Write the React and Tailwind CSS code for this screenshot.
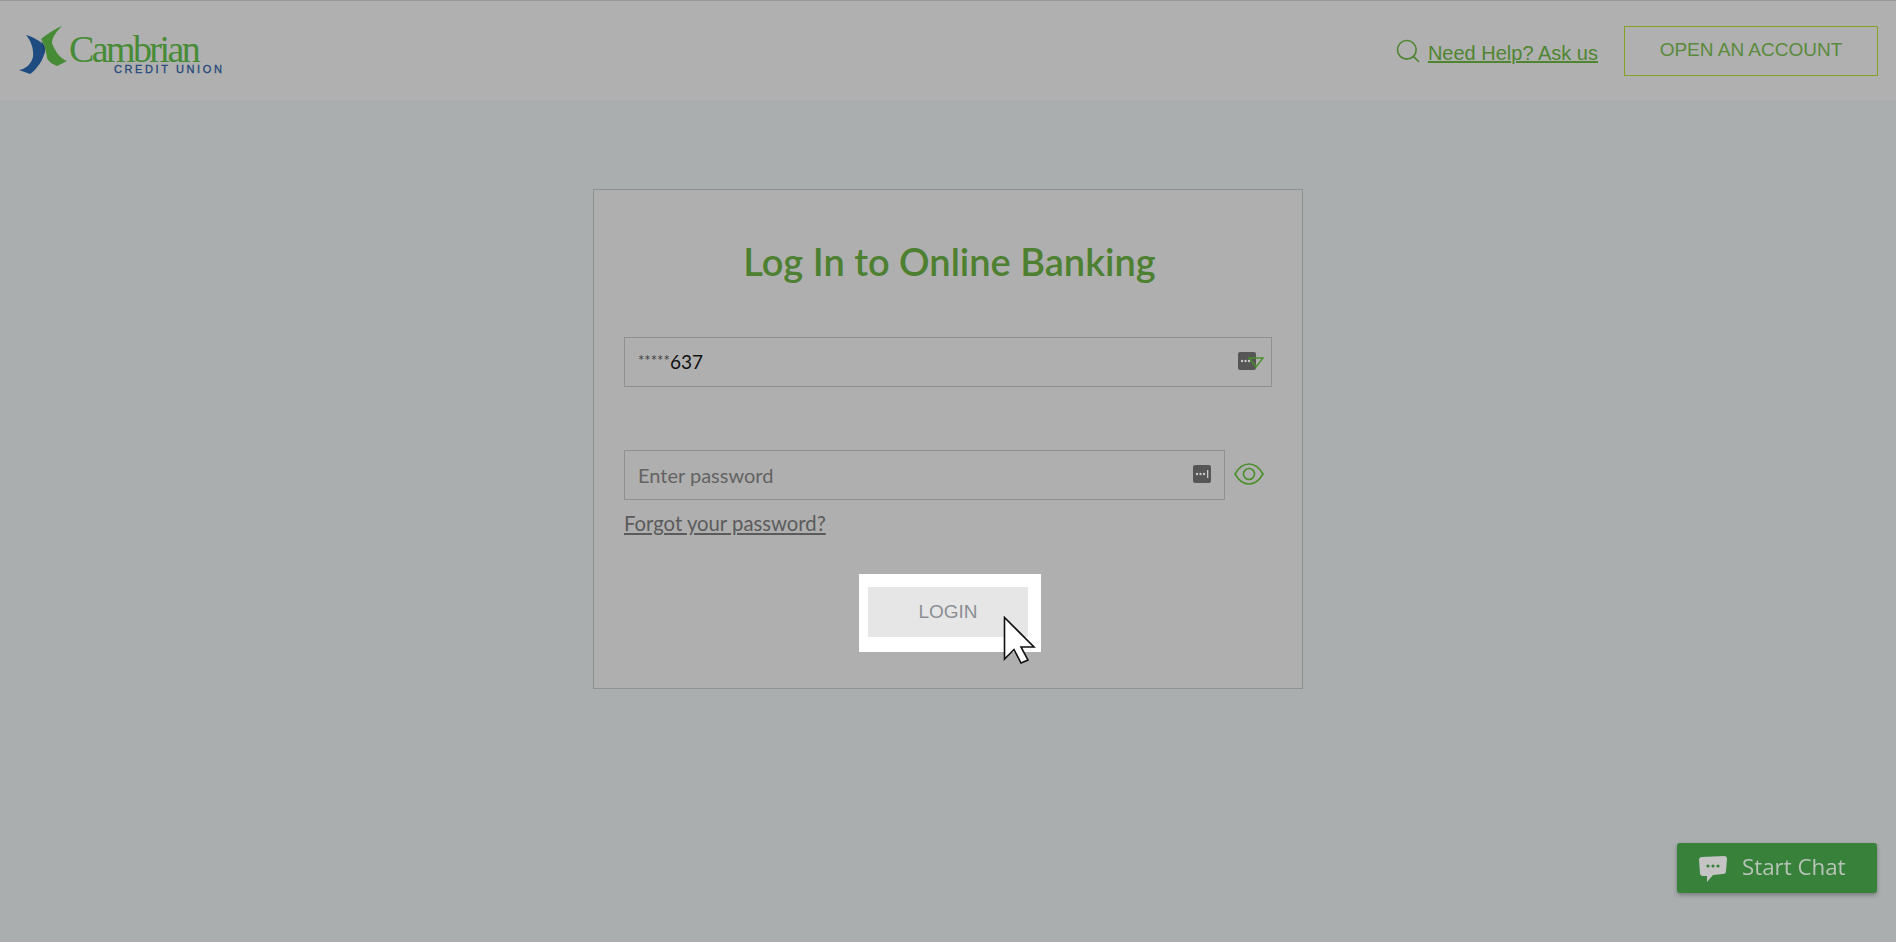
import React from "react";
import { Search } from "lucide-react";

const KeyBadge = ({ cut }) => (
  <svg width="18" height="18" viewBox="0 0 18 18" className="shrink-0">
    <rect x="0" y="0" width="18" height="18" rx="2" fill="#565656" />
    <circle cx="4" cy="9" r="1.2" fill="#c8c8c8" />
    <circle cx="7.5" cy="9" r="1.2" fill="#c8c8c8" />
    <circle cx="11" cy="9" r="1.2" fill="#c8c8c8" />
    {cut ? <rect x="14" y="5" width="1.3" height="8" fill="#c8c8c8" /> : null}
  </svg>
);

const Logo = () => (
  <div className="relative w-[200px] h-[56px] shrink-0 ml-[18px] mt-[2px]">
    <svg width="54" height="56" viewBox="18 24 54 56" className="absolute left-0 top-0">
      <path d="M62 26 C55 29 47 34 41 39 C44 43 46 51 47 58 C48 61 52 64 57 66 L67 61 C61 59 55 52 52 43 C52 37 57 31 62 26Z" fill="#478b36" />
      <path d="M26 35 C33 37 41 41 44 46 C46 52 43 60 38 66 C35 70 33 72 30 74 L19 70 C25 69 31 65 33 57 C34 49 31 41 26 35Z" fill="#1f4c80" />
      <path d="M41 41 C43 43 44 45 44.5 47 C45 49 45 52 44.5 55 C44 50 43 46 41 41Z" fill="#123a66" />
    </svg>
    <span className="absolute left-[51px] top-[10px] font-['Liberation_Serif',serif] text-[38px] leading-[30px] tracking-[-2.6px] text-[#478b36]">
      Cambrian
    </span>
    <span className="absolute left-[96px] top-[40px] font-['Liberation_Sans',sans-serif] text-[11px] leading-[11px] tracking-[2.6px] [-webkit-text-stroke:0.3px_#24487a] text-[#24487a] whitespace-nowrap">
      CREDIT UNION
    </span>
  </div>
);

const App = () => {
  return (
    <div className="relative min-h-[942px] h-[942px] overflow-hidden bg-[#aaaeaf] font-['Lato',sans-serif]">
      {/* header */}
      <header className="h-[100px] flex items-center justify-between border-t border-[#989898] bg-[#b0b0b0] pr-[18px]">
        <Logo />
        <div className="flex items-center">
          <Search size={28} strokeWidth={1.4} className="text-[#508532] mr-[6px]" />
          <a className="font-['Liberation_Sans',sans-serif] text-[20px] text-[#4f8530] underline mt-[5px] mr-[26px]">
            Need Help? Ask us
          </a>
          <a className="w-[254px] h-[50px] flex items-center justify-center border border-[#84a128] font-['Liberation_Sans',sans-serif] text-[19px] text-[#5a8a3c]">
            OPEN AN ACCOUNT
          </a>
        </div>
      </header>

      {/* login card */}
      <main className="flex justify-center pt-[89px]">
        <section className="w-[710px] h-[500px] border border-[#8e9292] bg-[#afafaf] px-[30px] pt-[47px]">
          <h1 className="text-center text-[38px] leading-[48px] font-semibold text-[#4d8030] ml-[3px]">
            Log In to Online Banking
          </h1>

          <div className="mt-[52px] w-[648px] h-[50px] flex items-center justify-between border border-[#8f9092] pl-[13px] pr-[7px]">
            <div className="text-[19px] text-[#111]">
              <span className="text-[15px] align-[3px] text-[#444]">*****</span>637
            </div>
            <div className="relative mr-[8px] -mt-[2px]">
              <KeyBadge />
              <svg width="16" height="11" viewBox="0 0 16 11" className="absolute left-[10px] top-[5px]">
                <path d="M1 1 H15 L8 10Z" fill="none" stroke="#4a8f2a" strokeWidth="1.4" />
              </svg>
            </div>
          </div>

          <div className="mt-[63px] flex items-center">
            <div className="w-[601px] h-[50px] flex items-center justify-between border border-[#8f9092] pl-[13px] pr-[13px]">
              <input
                readOnly
                placeholder="Enter password"
                className="w-[300px] bg-transparent outline-none text-[20px] placeholder:text-[#636363]"
              />
              <div className="-mt-[3px]">
                <KeyBadge cut />
              </div>
            </div>
            <svg width="30" height="24" viewBox="0 0 30 24" className="ml-[9px] -mt-[2px]">
              <path d="M1 12 C5 5 10 2 15 2 C20 2 25 5 29 12 C25 19 20 22 15 22 C10 22 5 19 1 12Z" fill="none" stroke="#4a8f2a" strokeWidth="1.6" />
              <circle cx="15" cy="12" r="5.5" fill="none" stroke="#4a8f2a" strokeWidth="1.6" />
            </svg>
          </div>

          <a className="block mt-[11px] text-[20.3px] leading-[24px] text-[#5b5b5b] underline">
            Forgot your password?
          </a>

          <div className="mt-[39px] flex justify-center">
            <div className="relative ml-[4px] w-[182px] h-[78px] bg-white pl-[9px] pt-[13px]">
              <button className="w-[160px] h-[50px] bg-[#e6e6e6] font-['Liberation_Sans',sans-serif] text-[19px] text-[#8b8f94]">
                LOGIN
              </button>
              <svg width="34" height="48" viewBox="0 0 34 48" className="absolute left-[144px] top-[42px]">
                <path d="M1.5 1.5 L1.5 43 L11 33.5 L18 47 L25 44 L18 31 L31 31 Z" fill="#fff" stroke="#111" strokeWidth="1.6" strokeLinejoin="miter" />
              </svg>
            </div>
          </div>
        </section>
      </main>

      {/* chat button */}
      <button className="fixed left-[1677px] top-[843px] w-[200px] h-[50px] flex items-center rounded-[3px] bg-[#37813a] shadow-[0_2px_4px_rgba(0,0,0,0.3)] pl-[22px] font-['Open_Sans',sans-serif] text-[22.3px] text-[#b7c4b8]">
        <svg width="28" height="26" viewBox="0 0 28 26" className="mr-[15px] mt-[1px]">
          <path d="M3 1 L25 0 C27 0 28 1 28 3 L27 15 C27 17 26 18 24 18 L14 19 L8 26 L8 20 L4 20 C2 20 1 19 1 17 L0 4 C0 2 1 1 3 1Z" fill="#c4c4c4" />
          <circle cx="9" cy="10" r="1.6" fill="#37813a" />
          <circle cx="14" cy="10" r="1.6" fill="#37813a" />
          <circle cx="19" cy="10" r="1.6" fill="#37813a" />
        </svg>
        <span className="-mt-[2px]">Start Chat</span>
      </button>
    </div>
  );
};

export default App;
